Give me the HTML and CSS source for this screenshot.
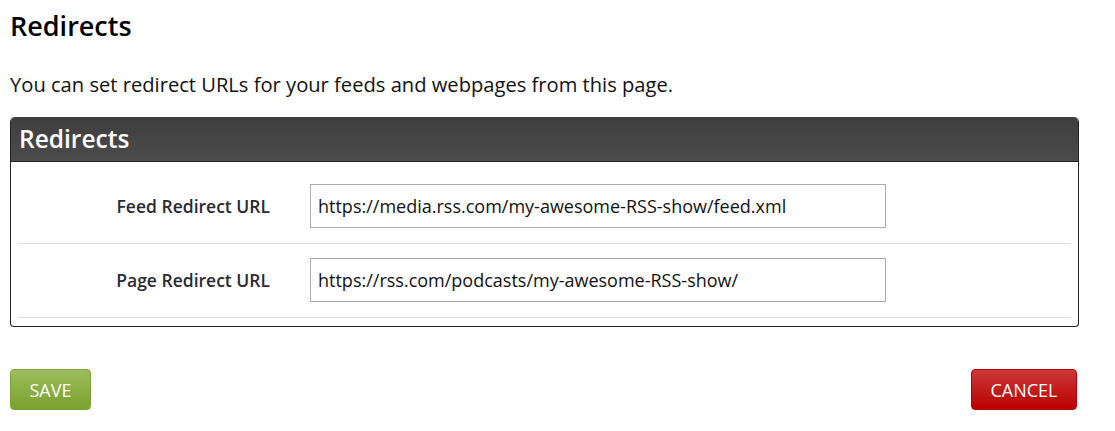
FILE: index.html
```html
<!DOCTYPE html>
<html>
<head>
<meta charset="utf-8">
<link rel="stylesheet" href="styles.css">
</head>
<body>
<div class="page">
  <h1 class="title">Redirects</h1>
  <p class="intro">You can set redirect URLs for your feeds and webpages from this page.</p>
  <div class="panel">
    <div class="panel-head">Redirects</div>
    <div class="panel-body">
      <div class="row">
        <label class="label">Feed Redirect URL</label>
        <input class="field" type="text" value="https://media.rss.com/my-awesome-RSS-show/feed.xml">
      </div>
      <div class="row">
        <label class="label">Page Redirect URL</label>
        <input class="field" type="text" value="https://rss.com/podcasts/my-awesome-RSS-show/">
      </div>
    </div>
  </div>
  <div class="actions">
    <button class="btn btn-save">SAVE</button>
    <button class="btn btn-cancel">CANCEL</button>
  </div>
</div>
</body>
</html>
```

FILE: styles.css
```css
* { box-sizing: border-box; }
html, body { margin: 0; padding: 0; background: #fff; }
body { font-family: "Open Sans", "DejaVu Sans", sans-serif; color: #111; }
.page { padding: 0 36px 0 10px; }
.title { margin: 0; padding-top: 9px; font-size: 27px; font-weight: 600; line-height: 34px; color: #000; }
.intro { margin: 0; padding-top: 27px; font-size: 20.15px; line-height: 28px; color: #111; }
.panel { margin-top: 19px; border: 1px solid #22222e; border-top: none; border-radius: 5px 5px 4px 4px; overflow: hidden; }
.panel-head { height: 45px; background: linear-gradient(#3e3e3e, #4b4b4b); color: #fff; font-size: 24.5px; font-weight: 600; line-height: 44px; border-bottom: 1px solid #22222e; margin: 0 -1px; padding-left: 9px; }
.panel-body { padding: 8px 7px 8px 7px; }
.row { display: grid; grid-template-columns: 252px 576px; column-gap: 40px; align-items: center; padding: 14px 0 15px; border-bottom: 1px solid #dedede; }
.label { text-align: right; font-size: 17.5px; font-weight: 600; color: #2a2a33; }
.field { width: 576px; height: 44px; border: 1px solid #aaa; padding: 0 7px; font-family: inherit; font-size: 18px; color: #111; outline: none; }
.actions { display: flex; justify-content: space-between; margin-top: 42px; padding-right: 2px; }
.btn { height: 41px; border-radius: 4px; font-family: inherit; font-size: 18px; color: #fff; padding: 0 18px; cursor: pointer; }
.btn-save { width: 81px; border: 1px solid #7ea233; background: linear-gradient(#9dbd5e, #7aa02c); }
.btn-cancel { width: 106px; border: 1px solid #b40000; background: linear-gradient(#cd3838, #b90000); }
```
